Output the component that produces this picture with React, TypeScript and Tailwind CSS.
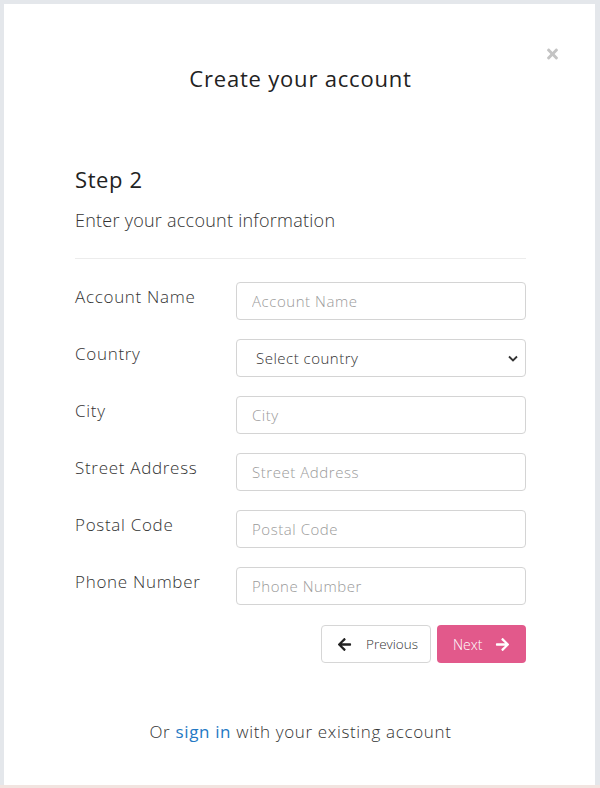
import React from "react";
import { FaArrowLeft, FaArrowRight, FaTimes } from "react-icons/fa";

const fields = [
  { label: "Account Name", placeholder: "Account Name" },
  { label: "Country", select: true },
  { label: "City", placeholder: "City" },
  { label: "Street Address", placeholder: "Street Address" },
  { label: "Postal Code", placeholder: "Postal Code" },
  { label: "Phone Number", placeholder: "Phone Number" },
];

export default function App() {
  return (
    <div
      className="w-[600px] h-[788px] bg-[#e4e7eb] flex flex-col overflow-hidden"
      style={{ fontFamily: "'Open Sans', Lato, sans-serif" }}
    >
      <div className="relative mt-[4px] ml-[4px] mr-[5px] h-[781px] bg-white pl-[71px] pr-[69px] pt-[59px] text-[#333]">
        <button className="absolute right-[35px] top-[42px] text-[#c4c4c4]">
          <FaTimes className="w-[15px] h-[16px]" />
        </button>
        <h1 className="text-center text-[22px] leading-[30px] font-normal tracking-[0.8px] text-[#222]">Create your account</h1>

        <h2 className="mt-[71px] text-[22px] leading-[30px] font-medium tracking-[0.6px] text-[#222]">Step 2</h2>
        <p className="mt-[13px] text-[18px] leading-[26px] font-light tracking-[0.25px] text-[#333]">Enter your account information</p>
        <div className="mt-[25px] h-px bg-[#ececec]" />

        <div className="mt-[23px] flex flex-col gap-[19px]">
          {fields.map((f) => (
            <div key={f.label} className="flex">
              <label className="w-[161px] shrink-0 pt-[3px] text-[17px] leading-[24px] font-light tracking-[0.7px] text-[#333]">
                {f.label}
              </label>
              {f.select ? (
                <div className="relative flex-1 h-[38px] border border-[#d4d4d4] rounded-[4px] flex items-center pl-[19px]">
                  <span className="text-[15px] text-[#333] font-light tracking-[0.5px]">Select country</span>
                  <svg className="absolute right-[7px] top-[15px]" width="10" height="7" viewBox="0 0 10 7">
                    <path d="M1 1.5 L5 5.5 L9 1.5" fill="none" stroke="#333" strokeWidth="1.8" />
                  </svg>
                </div>
              ) : (
                <input
                  className="flex-1 h-[38px] border border-[#d4d4d4] rounded-[4px] px-[15px] text-[15px] font-light tracking-[0.55px] placeholder:text-[#9a9a9a] outline-none"
                  placeholder={f.placeholder}
                />
              )}
            </div>
          ))}
        </div>

        <div className="mt-[20px] flex justify-end gap-[6px]">
          <button className="w-[110px] h-[38px] border border-[#d6d6d6] rounded-[4px] bg-white flex items-center pl-[15px] text-[13.5px] text-[#333] font-light">
            <FaArrowLeft className="w-[15px] h-[15px] text-[#222]" />
            <span className="ml-[14px]">Previous</span>
          </button>
          <button className="w-[89px] h-[38px] rounded-[4px] bg-[#e2598b] flex items-center pl-[16px] text-[14px] text-white font-light">
            <span>Next</span>
            <FaArrowRight className="ml-[13px] w-[15px] h-[15px]" />
          </button>
        </div>

        <p className="mt-[57px] text-center text-[17px] leading-[24px] font-light tracking-[0.65px] text-[#333]">
          Or <a className="text-[#2479c4] font-normal">sign in</a> with your existing account
        </p>
      </div>
      <div className="h-[3px] bg-[#f2e4e0]" />
    </div>
  );
}
